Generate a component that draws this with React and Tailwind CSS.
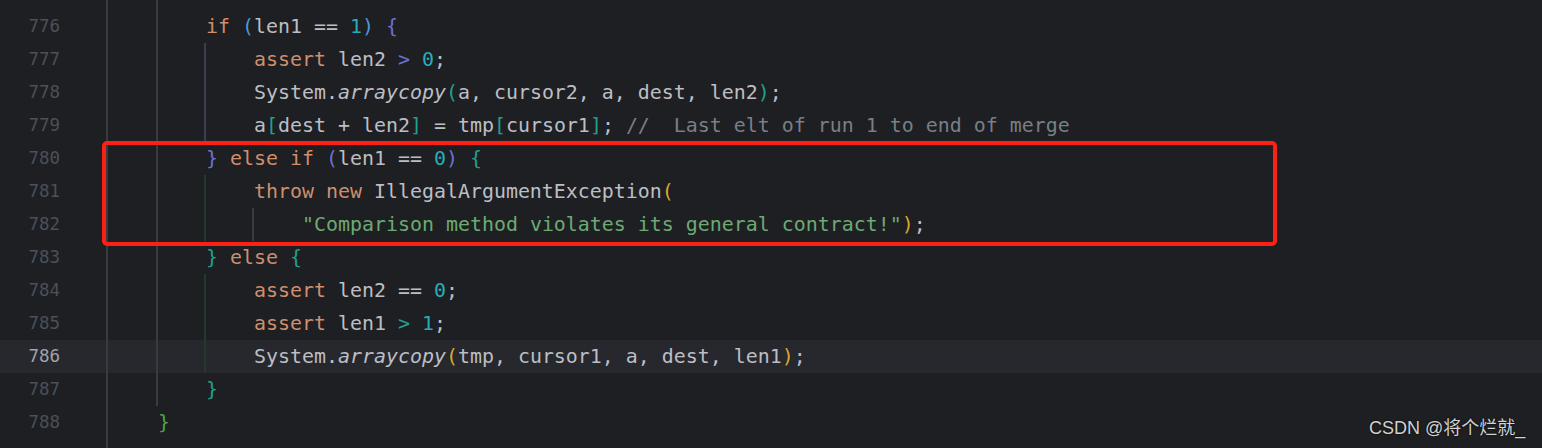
const tone = {
  kw: "text-[#cf8e6d]",
  id: "text-[#bcbec4]",
  fn: "text-[#bcbec4] italic",
  num: "text-[#2aacb8]",
  str: "text-[#6aab73]",
  cmt: "text-[#7a7e85]",
  blue: "text-[#4f95dc]",
  violet: "text-[#6a72d6]",
  teal: "text-[#22a08e]",
  gold: "text-[#d9a62e]",
  green: "text-[#4fa447]",
}

const guide = {
  g: "border-l-2 border-[#393b40]",
  b: "border-l-2 border-[#3a3e55]",
  t: "border-l-2 border-[#21392f]",
}

const lines = [
  { n: 776, cells: ["", "g"], code: [["kw", "if "], ["blue", "("], ["id", "len1 == "], ["num", "1"], ["blue", ")"], ["id", " "], ["violet", "{"]] },
  { n: 777, cells: ["", "g", "b"], code: [["kw", "assert "], ["id", "len2 "], ["violet", ">"], ["id", " "], ["num", "0"], ["id", ";"]] },
  { n: 778, cells: ["", "g", "b"], code: [["id", "System."], ["fn", "arraycopy"], ["teal", "("], ["id", "a, cursor2, a, dest, len2"], ["teal", ")"], ["id", ";"]] },
  { n: 779, cells: ["", "g", "b"], code: [["id", "a"], ["teal", "["], ["id", "dest + len2"], ["teal", "]"], ["id", " = tmp"], ["teal", "["], ["id", "cursor1"], ["teal", "]"], ["id", "; "], ["cmt", "//  Last elt of run 1 to end of merge"]] },
  { n: 780, cells: ["", "g"], code: [["violet", "}"], ["kw", " else if "], ["violet", "("], ["id", "len1 == "], ["num", "0"], ["violet", ")"], ["id", " "], ["teal", "{"]] },
  { n: 781, cells: ["", "g", "t"], code: [["kw", "throw new "], ["id", "IllegalArgumentException"], ["gold", "("]] },
  { n: 782, cells: ["", "g", "t", "g"], code: [["str", "\"Comparison method violates its general contract!\""], ["gold", ")"], ["id", ";"]] },
  { n: 783, cells: ["", "g"], code: [["teal", "}"], ["kw", " else "], ["teal", "{"]] },
  { n: 784, cells: ["", "g", "t"], code: [["kw", "assert "], ["id", "len2 == "], ["num", "0"], ["id", ";"]] },
  { n: 785, cells: ["", "g", "t"], code: [["kw", "assert "], ["id", "len1 "], ["teal", ">"], ["id", " "], ["num", "1"], ["id", ";"]] },
  { n: 786, cells: ["", "g", "t"], code: [["id", "System."], ["fn", "arraycopy"], ["gold", "("], ["id", "tmp, cursor1, a, dest, len1"], ["gold", ")"], ["id", ";"]], current: true },
  { n: 787, cells: ["", "g"], code: [["teal", "}"]] },
  { n: 788, cells: [""], code: [["green", "}"]] },
]

function Gutter({ n, current }) {
  return (
    <div className={`w-[108px] shrink-0 self-stretch flex items-center justify-end border-r-2 border-[#393b40] pr-[46px] text-[17.5px] ${current ? "text-[#a1a3ab]" : "text-[#4b5059]"}`}>
      {n}
    </div>
  )
}

function Cells({ cells }) {
  return cells.map((c, i) => (
    <div key={i} className={`w-[48px] shrink-0 self-stretch ${c ? guide[c] : ""}`} />
  ))
}

export default function App() {
  return (
    <div className="relative w-[1542px] h-[448px] overflow-hidden bg-[#1e1f22] font-['DejaVu_Sans_Mono',monospace] text-[19.93px]">
      <div className="flex flex-col h-full">
        <div className="flex h-[10px]">
          <Gutter n="" />
          <Cells cells={["", "g"]} />
        </div>

        {lines.map((line) => (
          <div key={line.n} className={`flex items-center h-[33px] ${line.current ? "bg-[#26282e]" : ""}`}>
            <Gutter n={line.n} current={line.current} />
            <Cells cells={line.cells} />
            <div className="pl-[2px] whitespace-pre">
              {line.code.map(([t, s], i) => (
                <span key={i} className={tone[t]}>{s}</span>
              ))}
            </div>
          </div>
        ))}

        <div className="flex flex-1">
          <Gutter n="" />
        </div>
      </div>

      {/* highlight box drawn over the code */}
      <div className="absolute left-[102px] top-[141px] w-[1175px] h-[105px] border-4 border-[#fd2015] rounded-[5px]" />

      <div className="absolute left-[1369px] top-[416px] leading-[24px] text-[18px] text-[#d2d2d2] font-['Liberation_Sans','Noto_Sans_CJK_SC',sans-serif] [text-shadow:0_0_2px_#000]">
        CSDN @将个烂就_
      </div>
    </div>
  )
}
